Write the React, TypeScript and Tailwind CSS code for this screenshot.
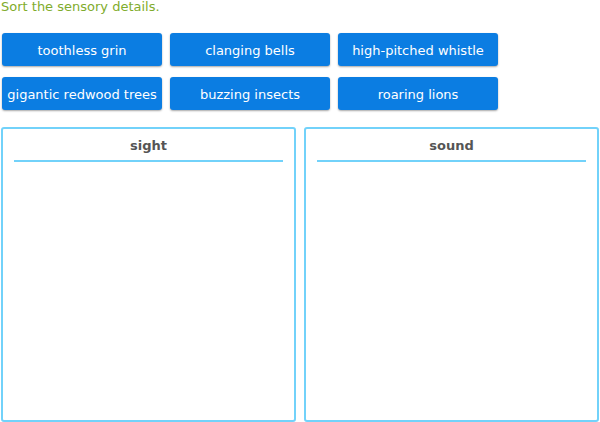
import React from 'react';

const items = [
  'toothless grin',
  'clanging bells',
  'high-pitched whistle',
  'gigantic redwood trees',
  'buzzing insects',
  'roaring lions',
];

const Bin: React.FC<{ title: string }> = ({ title }) => (
  <div className="flex-1 h-[295px] rounded-[3px] border-2 border-[#72d2fa] px-[11px]">
    <div className="pt-[8px] pb-[5px] text-center text-[13px] leading-[18px] font-bold text-[#555]">{title}</div>
    <div className="h-[2px] bg-[#72d2fa]" />
  </div>
);

export default function App() {
  return (
    <div className="w-[600px] h-[422px] bg-white font-['DejaVu_Sans',Verdana,sans-serif] overflow-hidden">
      <div className="pl-[1px] text-[13px] leading-[14px] text-[#7fac2c]">Sort the sensory details.</div>
      <div className="mt-[19px] pl-[2px] grid grid-cols-[160px_160px_160px] gap-x-[8px] gap-y-[11px]">
        {items.map((t) => (
          <div
            key={t}
            className="h-[33px] pt-[2px] rounded-[3px] bg-[#0b7de2] shadow-[0_1px_2px_rgba(0,0,0,0.35)] flex items-center justify-center text-[13px] text-white"
          >
            {t}
          </div>
        ))}
      </div>
      <div className="mt-[17px] pl-[1px] pr-[1px] flex gap-[8px]">
        <Bin title="sight" />
        <Bin title="sound" />
      </div>
    </div>
  );
}
